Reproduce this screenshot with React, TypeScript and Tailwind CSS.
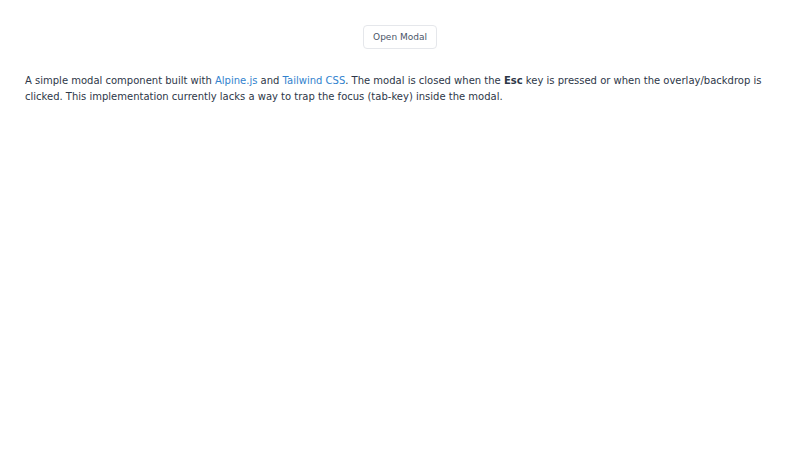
export default function App() {
  return (
    <div className="min-h-screen bg-white px-[25px] pt-[25px] text-[#2d3748]" style={{ fontFamily: '"DejaVu Sans", sans-serif' }}>
      <div className="flex justify-center">
        <button
          type="button"
          className="h-[24px] rounded border border-gray-200 bg-white px-[9px] pt-px text-[9px] text-[#4a5568]"
        >
          Open Modal
        </button>
      </div>
      <p className="mt-[24px] text-[10px] leading-[16px]">
        A simple modal component built with <a className="text-[#3182ce]">Alpine.js</a> and{' '}
        <a className="text-[#3182ce]">Tailwind CSS</a>. The modal is closed when the <strong>Esc</strong> key is
        pressed or when the overlay/backdrop is clicked. This implementation currently lacks a way to trap the focus
        (tab-key) inside the modal.
      </p>
    </div>
  );
}
